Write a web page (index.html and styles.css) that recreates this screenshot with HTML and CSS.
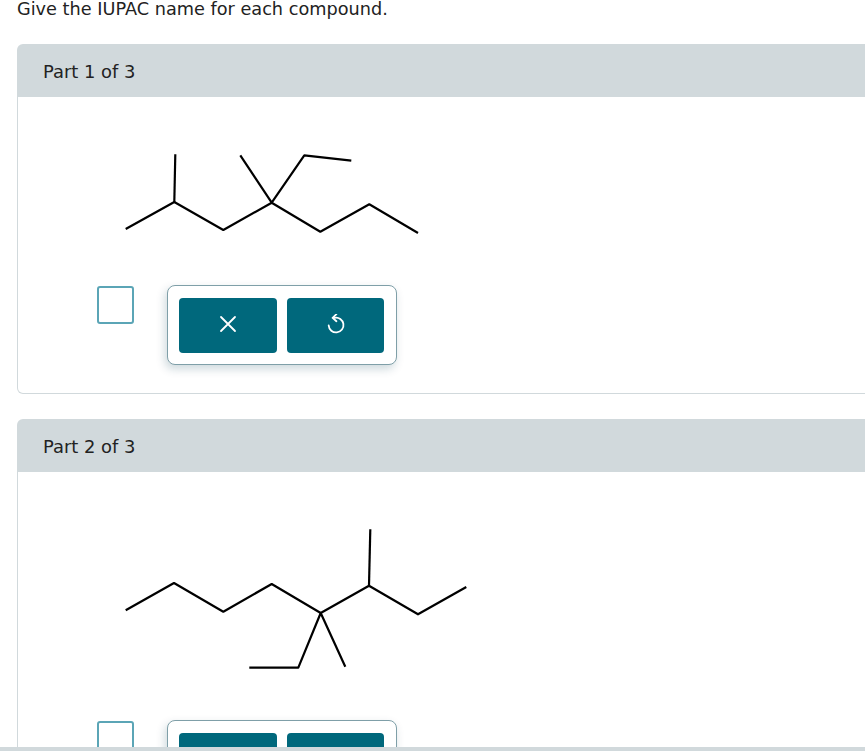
FILE: index.html
```html
<!DOCTYPE html>
<html lang="en">
<head>
  <meta charset="UTF-8">
  <title>Give the IUPAC name</title>
  <link rel="stylesheet" href="styles.css">
</head>
<body>

<div class="page">
  <p class="question">Give the IUPAC name for each compound.</p>

  <!-- Part 1 -->
  <div class="part">
    <div class="part-header">Part 1 of 3</div>
    <div class="part-body">
      <svg class="molecule molecule-one" viewBox="120 150 310 95" width="310" height="95">
        <polyline points="125.7,229 174.3,202 223.3,230 271.7,202.7 320.3,231.7 369.3,204.3 418,233"/>
        <polyline points="174.3,202 175.3,154.3"/>
        <polyline points="240.3,155.3 271.7,202.7 304.3,155.3 351.3,160.7"/>
      </svg>
      <div class="answer-row">
        <input type="text" class="answer">
        <div class="toolbar">
          <button class="tool-btn tool-clear" aria-label="Clear">
            <svg viewBox="0 0 20 20" width="20" height="20"><path d="M3 3 L17 17 M17 3 L3 17"/></svg>
          </button>
          <button class="tool-btn tool-undo" aria-label="Undo">
            <svg viewBox="0 0 20 20" width="20" height="20"><path d="M8.6 3.8 A7.4 7.4 0 1 1 2.7 11.5"/><path d="M10.4 0.2 L6.6 3.9 L10.4 7.2"/></svg>
          </button>
        </div>
      </div>
    </div>
  </div>

  <!-- Part 2 -->
  <div class="part">
    <div class="part-header">Part 2 of 3</div>
    <div class="part-body">
      <svg class="molecule molecule-two" viewBox="120 525 355 150" width="355" height="150">
        <polyline points="125.7,610.3 174,583 223.3,611.7 271.7,584 320.7,613 369,585.7 418,614.3 466.3,587"/>
        <polyline points="369,585.7 370.3,529.3"/>
        <polyline points="249.3,667.7 298.3,667.7 320.7,613 345.3,666.7"/>
      </svg>
      <div class="answer-row">
        <input type="text" class="answer">
        <div class="toolbar">
          <button class="tool-btn tool-clear" aria-label="Clear">
            <svg viewBox="0 0 20 20" width="20" height="20"><path d="M3 3 L17 17 M17 3 L3 17"/></svg>
          </button>
          <button class="tool-btn tool-undo" aria-label="Undo">
            <svg viewBox="0 0 20 20" width="20" height="20"><path d="M8.6 3.8 A7.4 7.4 0 1 1 2.7 11.5"/><path d="M10.4 0.2 L6.6 3.9 L10.4 7.2"/></svg>
          </button>
        </div>
      </div>
    </div>
  </div>
</div>

<div class="bottom-bar"></div>

</body>
</html>
```

FILE: styles.css
```css
* { box-sizing: border-box; }

html, body {
  height: 100%;
}

body {
  margin: 0;
  display: flex;
  flex-direction: column;
  overflow: hidden;
  background: white;
  font-family: "DejaVu Sans", Verdana, sans-serif;
  color: #222;
}

.page {
  flex: 1;
  min-height: 0;
  overflow: hidden;
  padding-left: 17px;
}

.question {
  height: 20px;
  margin: 0 0 24px;
  font-size: 17.7px;
  line-height: 18px;
}

.part {
  width: 880px;
  margin-bottom: 25px;
  border-radius: 6px;
}

.part-header {
  height: 53px;
  padding-left: 26px;
  background: #d1d9dc;
  border-radius: 6px 6px 0 0;
  font-size: 17.9px;
  line-height: 56px;
}

.part-body {
  padding: 53px 0 28px;
  border: 1px solid #d1d9dc;
  border-top: none;
  border-radius: 0 0 6px 6px;
}

.molecule {
  display: block;
  margin-left: 102px;
}

.molecule polyline {
  fill: none;
  stroke: #000;
  stroke-width: 2.2;
  stroke-linejoin: round;
}

.molecule-one { margin-bottom: 40px; }
.molecule-two { margin-bottom: 45px; }

.answer-row {
  display: flex;
  align-items: flex-start;
}

.answer {
  width: 37px;
  height: 38px;
  margin: 1px 33px 0 79px;
  padding: 0;
  background: white;
  border: 2px solid #5ba5b6;
  border-radius: 3px;
}

.toolbar {
  display: flex;
  gap: 10px;
  width: 230px;
  height: 80px;
  padding: 12px 12px 12px 11px;
  background: white;
  border: 1px solid #7f9fa8;
  border-radius: 8px;
  box-shadow: -2px 4px 10px rgba(0, 60, 80, 0.2);
}

.tool-btn {
  display: flex;
  align-items: center;
  justify-content: center;
  height: 55px;
  padding: 0 0 3px;
  background: #00687c;
  border: none;
  border-radius: 4px;
}

.tool-clear { width: 98px; }
.tool-undo { width: 97px; }

.tool-btn path {
  fill: none;
  stroke: white;
  stroke-width: 1.8;
  stroke-linecap: round;
  stroke-linejoin: round;
}

.bottom-bar {
  flex: none;
  height: 4px;
  background: #d1d9dc;
}
```
